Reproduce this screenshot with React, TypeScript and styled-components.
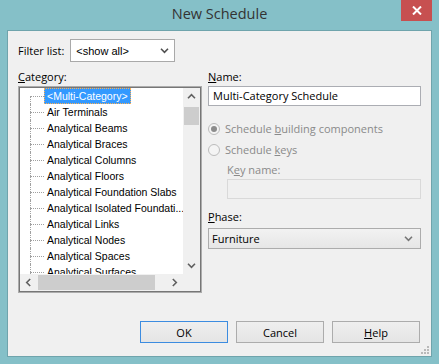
import React from 'react';
import styled, { createGlobalStyle, css } from 'styled-components';

const GlobalStyle = createGlobalStyle`
  html, body {
    margin: 0;
    padding: 0;
    background: #ffffff;
  }
  * {
    box-sizing: border-box;
  }
`;

const uiFont = `"Open Sans", "Noto Sans", sans-serif`;
const listFont = `"Liberation Sans", Arial, sans-serif`;

const categories = [
  '<Multi-Category>',
  'Air Terminals',
  'Analytical Beams',
  'Analytical Braces',
  'Analytical Columns',
  'Analytical Floors',
  'Analytical Foundation Slabs',
  'Analytical Isolated Foundati...',
  'Analytical Links',
  'Analytical Nodes',
  'Analytical Spaces',
  'Analytical Surfaces',
];

type Dir = 'up' | 'down' | 'left' | 'right';

const rotation: Record<Dir, number> = { up: 0, right: 90, down: 180, left: 270 };

// small scroll / dropdown chevron
const Chevron: React.FC<{ dir: Dir; color?: string }> = ({ dir, color = '#606060' }) => (
  <svg width="9" height="9" viewBox="0 0 9 9" style={{ transform: `rotate(${rotation[dir]}deg)` }}>
    <polyline points="1,6.2 4.5,2.7 8,6.2" fill="none" stroke={color} strokeWidth="1.6" />
  </svg>
);

const App: React.FC = () => {
  return (
    <>
      <GlobalStyle />
      <Window>
        <TitleBar>
          <Title>New Schedule</Title>
          <CloseButton>
            <svg width="10" height="9" viewBox="0 0 10 9">
              <path d="M1,0.5 L9,8.5 M9,0.5 L1,8.5" stroke="#ffffff" strokeWidth="2" />
            </svg>
          </CloseButton>
        </TitleBar>

        <Client>
          <FilterRow>
            <Label>Filter list:</Label>
            <Combo>
              <ComboText>&lt;show all&gt;</ComboText>
              <Chevron dir="down" color="#505050" />
            </Combo>
          </FilterRow>

          <Columns>
            <LeftColumn>
              <Label>
                <u>C</u>ategory:
              </Label>
              <TreeFrame>
                <TreeInner>
                  <TreeList>
                    {categories.map((name, i) => (
                      <TreeRow key={name} $first={i === 0}>
                        <TreeText $selected={i === 0}>{name}</TreeText>
                      </TreeRow>
                    ))}
                  </TreeList>
                  <VScroll>
                    <ScrollButton>
                      <Chevron dir="up" />
                    </ScrollButton>
                    <VThumb />
                    <Spacer />
                    <ScrollButton>
                      <Chevron dir="down" />
                    </ScrollButton>
                  </VScroll>
                  <HScroll>
                    <ScrollButton>
                      <Chevron dir="left" />
                    </ScrollButton>
                    <HThumb />
                    <Spacer />
                    <ScrollButton>
                      <Chevron dir="right" />
                    </ScrollButton>
                  </HScroll>
                  <Corner />
                </TreeInner>
              </TreeFrame>
            </LeftColumn>

            <RightColumn>
              <Label>
                <u>N</u>ame:
              </Label>
              <TextInput>Multi-Category Schedule</TextInput>

              <RadioGroup>
                <RadioRow>
                  <Radio $checked />
                  <DisabledText>
                    Schedule <u>b</u>uilding components
                  </DisabledText>
                </RadioRow>
                <RadioRow>
                  <Radio />
                  <DisabledText>
                    Schedule <u>k</u>eys
                  </DisabledText>
                </RadioRow>
              </RadioGroup>

              <KeyBlock>
                <DisabledText>
                  K<u>e</u>y name:
                </DisabledText>
                <DisabledInput />
              </KeyBlock>

              <PhaseLabel>
                <u>P</u>hase:
              </PhaseLabel>
              <Select>
                <span>Furniture</span>
                <Chevron dir="down" color="#777777" />
              </Select>
            </RightColumn>
          </Columns>

          <ButtonRow>
            <Button $default>OK</Button>
            <Button>Cancel</Button>
            <Button>
              <u>H</u>elp
            </Button>
          </ButtonRow>

          <Grip>
            <svg width="9" height="9" viewBox="0 0 9 9">
              <rect x="6" y="0" width="2" height="2" fill="#b9b9b9" />
              <rect x="3" y="3" width="2" height="2" fill="#b9b9b9" />
              <rect x="6" y="3" width="2" height="2" fill="#b9b9b9" />
              <rect x="0" y="6" width="2" height="2" fill="#b9b9b9" />
              <rect x="3" y="6" width="2" height="2" fill="#b9b9b9" />
              <rect x="6" y="6" width="2" height="2" fill="#b9b9b9" />
            </svg>
          </Grip>
        </Client>
      </Window>
    </>
  );
};

// Styled Components
const Window = styled.div`
  width: 439px;
  height: 364px;
  background: #85c0c8;
  display: flex;
  flex-direction: column;
  padding: 0 7px 7px 7px;
`;

const TitleBar = styled.div`
  height: 30px;
  display: grid;
  grid-template-columns: 1fr auto 1fr;
  align-items: start;
`;

const Title = styled.div`
  grid-column: 2;
  padding-top: 4px;
  font-family: ${uiFont};
  font-size: 14.5px;
  line-height: 20px;
  color: #333333;
`;

const CloseButton = styled.div`
  grid-column: 3;
  justify-self: end;
  width: 31px;
  height: 21px;
  background: #c75050;
  display: flex;
  align-items: center;
  justify-content: center;
`;

const Client = styled.div`
  position: relative;
  flex: 1;
  border: 1px solid #6fa4ac;
  background: #f0f0f0;
  display: flex;
  flex-direction: column;
  padding: 8px 10px 13px 10px;
`;

const FilterRow = styled.div`
  display: flex;
  align-items: center;
  gap: 6px;
`;

const Label = styled.div`
  font-family: ${uiFont};
  font-size: 11px;
  line-height: 14px;
  color: #000000;
`;

const Combo = styled.div`
  width: 105px;
  height: 23px;
  background: #ffffff;
  border: 1px solid #a9a9a9;
  display: flex;
  align-items: center;
  justify-content: space-between;
  padding: 0 5px 0 5px;
`;

const ComboText = styled.span`
  font-family: ${listFont};
  font-size: 11px;
  color: #000000;
`;

const Columns = styled.div`
  display: flex;
  gap: 6px;
  margin-top: 8px;
`;

const LeftColumn = styled.div`
  width: 184px;
  display: flex;
  flex-direction: column;
  gap: 2px;
`;

const RightColumn = styled.div`
  flex: 1;
  display: flex;
  flex-direction: column;
`;

const TreeFrame = styled.div`
  height: 207px;
  border: 1px solid #acacac;
`;

const TreeInner = styled.div`
  height: 100%;
  border: 1px solid #767676;
  display: grid;
  grid-template-columns: 1fr 17px;
  grid-template-rows: 1fr 17px;
  background: #ffffff;
`;

const TreeList = styled.div`
  overflow: hidden;
  background: #ffffff;
`;

const TreeRow = styled.div<{ $first?: boolean }>`
  position: relative;
  height: 16px;
  display: flex;
  align-items: center;
  padding-left: 24px;

  &::before {
    content: '';
    position: absolute;
    left: 10px;
    top: ${p => (p.$first ? '8px' : '0')};
    bottom: 0;
    border-left: 1px dotted #a0a0a0;
  }

  &::after {
    content: '';
    position: absolute;
    left: 10px;
    top: 8px;
    width: 14px;
    border-top: 1px dotted #a0a0a0;
  }
`;

const TreeText = styled.span<{ $selected?: boolean }>`
  height: 16px;
  padding: 0 3px;
  font-family: ${listFont};
  font-size: 10.5px;
  line-height: 16px;
  white-space: nowrap;
  color: #000000;

  ${p =>
    p.$selected &&
    css`
      background: #3399ff;
      color: #ffffff;
      outline: 1px dotted #ffb050;
      outline-offset: -1px;
    `}
`;

const scrollTrack = css`
  background: #f0f0f0;
  display: flex;
`;

const VScroll = styled.div`
  ${scrollTrack};
  flex-direction: column;
`;

const HScroll = styled.div`
  ${scrollTrack};
  flex-direction: row;
`;

const ScrollButton = styled.div`
  width: 17px;
  height: 17px;
  flex: none;
  display: flex;
  align-items: center;
  justify-content: center;
`;

const VThumb = styled.div`
  margin: 2px 1px 0 1px;
  height: 18px;
  background: #cdcdcd;
`;

const HThumb = styled.div`
  margin: 1px 0 1px 1px;
  width: 117px;
  background: #cdcdcd;
`;

const Spacer = styled.div`
  flex: 1;
`;

const Corner = styled.div`
  background: #f0f0f0;
`;

const TextInput = styled.div`
  margin-top: 2px;
  height: 20px;
  background: #ffffff;
  border: 1px solid #abadb3;
  padding: 0 4px;
  font-family: ${uiFont};
  font-size: 11px;
  line-height: 18px;
  color: #000000;
`;

const RadioGroup = styled.div`
  margin-top: 12px;
  display: flex;
  flex-direction: column;
`;

const RadioRow = styled.div`
  height: 21px;
  display: flex;
  align-items: center;
  gap: 5px;
`;

const Radio = styled.span<{ $checked?: boolean }>`
  width: 12px;
  height: 12px;
  border-radius: 50%;
  border: 1px solid #bcbcbc;
  background: #f4f4f4;
  display: flex;
  align-items: center;
  justify-content: center;

  &::after {
    content: '';
    width: 6px;
    height: 6px;
    border-radius: 50%;
    background: ${p => (p.$checked ? '#8c8c8c' : 'transparent')};
  }
`;

const DisabledText = styled.span`
  font-family: ${uiFont};
  font-size: 11px;
  line-height: 14px;
  color: #8a8a8a;
`;

const KeyBlock = styled.div`
  margin-top: 3px;
  margin-left: 19px;
  display: flex;
  flex-direction: column;
  gap: 2px;
`;

const DisabledInput = styled.div`
  height: 20px;
  background: #f0f0f0;
  border: 1px solid #d9d9d9;
`;

const PhaseLabel = styled(Label)`
  margin-top: 11px;
`;

const Select = styled.div`
  margin-top: 4px;
  height: 21px;
  border: 1px solid #acacac;
  background: linear-gradient(#f2f2f2, #e6e6e6);
  display: flex;
  align-items: center;
  justify-content: space-between;
  padding: 0 7px 0 3px;
  font-family: ${uiFont};
  font-size: 11px;
  color: #000000;
`;

const ButtonRow = styled.div`
  margin-top: auto;
  display: flex;
  justify-content: flex-end;
  gap: 8px;
  padding-right: 1px;
`;

const Button = styled.div<{ $default?: boolean }>`
  width: 88px;
  height: 22px;
  border: 1px solid ${p => (p.$default ? '#3c8ce0' : '#acacac')};
  background: linear-gradient(#efefef, #e5e5e5);
  display: flex;
  align-items: center;
  justify-content: center;
  font-family: ${uiFont};
  font-size: 11px;
  color: #000000;
`;

const Grip = styled.div`
  position: absolute;
  right: 1px;
  bottom: 1px;
  width: 9px;
  height: 9px;
  display: flex;
`;

export default App;
